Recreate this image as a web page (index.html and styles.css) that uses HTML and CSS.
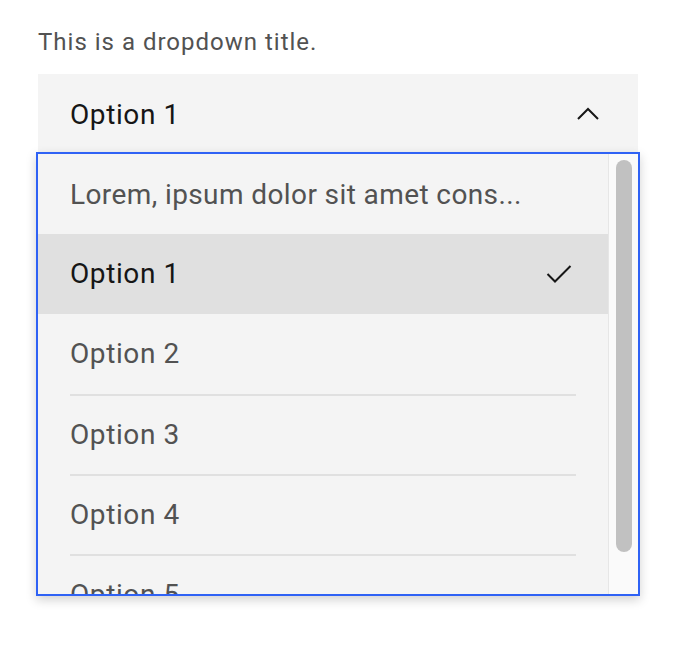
FILE: index.html
```html
<!DOCTYPE html>
<html lang="en">
<head>
    <meta charset="UTF-8">
    <meta name="viewport" content="width=device-width, initial-scale=1.0">
    <title>Dropdown</title>
    <link rel="stylesheet" href="styles.css">
</head>
<body>
    <div class="page">
        <div class="title">This is a dropdown title.</div>
        <div class="field">
            <span>Option 1</span>
            <svg class="chevron" width="24" height="14" viewBox="0 0 24 14">
                <path d="M2 12 L12 2 L22 12" fill="none" stroke="#161616" stroke-width="2"/>
            </svg>
        </div>
        <div class="menu">
            <ul class="list">
                <li class="placeholder">Lorem, ipsum dolor sit amet cons...</li>
                <li class="selected">
                    <span>Option 1</span>
                    <svg class="check" width="26" height="20" viewBox="0 0 26 20">
                        <path d="M1.5 10 L9 17.5 L24.5 2" fill="none" stroke="#161616" stroke-width="2"/>
                    </svg>
                </li>
                <li><span>Option 2</span></li>
                <li class="line"><span>Option 3</span></li>
                <li class="line"><span>Option 4</span></li>
                <li class="line"><span>Option 5</span></li>
            </ul>
            <div class="scroll">
                <div class="thumb"></div>
            </div>
        </div>
    </div>
</body>
</html>
```

FILE: styles.css
```css
* {
    margin: 0;
    padding: 0;
    list-style: none;
    box-sizing: border-box;
}

body {
    background: #fff;
    font-family: Roboto, "Noto Sans", sans-serif;
}

.page {
    padding: 26px 38px;
    width: 678px;
}

.title {
    font-size: 24px;
    line-height: 32px;
    letter-spacing: 1px;
    color: #525252;
    margin-bottom: 16px;
}

.field {
    width: 600px;
    height: 78px;
    background: #f4f4f4;
    display: flex;
    align-items: center;
    justify-content: space-between;
    padding: 2px 38px 0 32px;
    font-size: 28px;
    letter-spacing: 0.6px;
    color: #161616;
}

.menu {
    width: 604px;
    height: 444px;
    margin-left: -2px;
    border: 2px solid #2f62f5;
    background: #f4f4f4;
    display: flex;
    box-shadow: 0 4px 10px rgba(0, 0, 0, 0.18);
}

.list {
    flex: 1;
    overflow: hidden;
}

.list li {
    height: 80px;
    padding: 0 32px;
    font-size: 28px;
    letter-spacing: 0.4px;
    color: #525252;
    display: flex;
    align-items: center;
}

.list li span {
    flex: 1;
    height: 80px;
    line-height: 80px;
    letter-spacing: 0.6px;
}

.list li.line span {
    border-top: 2px solid #e0e0e0;
    line-height: 78px;
}

.list li.selected {
    background: #e0e0e0;
    color: #161616;
    padding-right: 36px;
}

.scroll {
    width: 30px;
    background: #fafafa;
    border-left: 1px solid #e6e6e6;
    padding: 6px 6px 0 7px;
}

.thumb {
    width: 16px;
    height: 392px;
    border-radius: 8px;
    background: #c1c1c1;
}
```
